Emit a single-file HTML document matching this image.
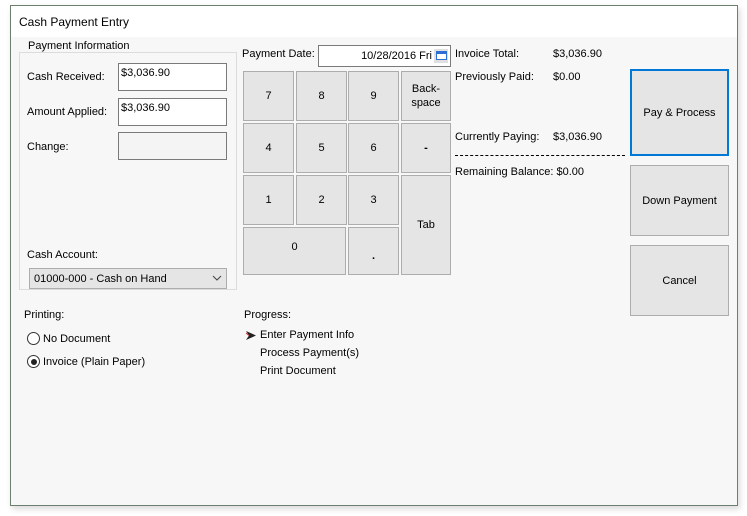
<!DOCTYPE html>
<html><head><style>
body{margin:0;width:747px;height:516px;background:#fff;font-family:"Liberation Sans",sans-serif;font-size:11px;color:#000;position:relative;overflow:hidden}
.a{position:absolute;white-space:nowrap}
.win{position:absolute;left:10px;top:5px;width:726px;height:499px;border:1px solid #6b806e;background:#f7f7f7;box-shadow:2px 3px 6px rgba(0,0,0,.15)}
.title{position:absolute;left:11px;top:6px;width:726px;height:31px;background:#fff}
.tb{position:absolute;border:1px solid #7a7a7a;background:#fff;box-sizing:border-box;padding:3px 2px;font-size:11px}
.btn{position:absolute;background:#e5e5e5;border:1px solid #adadad;box-sizing:border-box;display:flex;align-items:center;justify-content:center;text-align:center;line-height:14px}
</style></head><body>
<div class="win"></div>
<div class="title"></div>
<div class="a" style="left:19px;top:15px;font-size:12px">Cash Payment Entry</div>
<div class="a" style="left:19px;top:52px;width:218px;height:238px;border:1px solid #dcdcdc;box-sizing:border-box"></div>
<div class="a" style="left:25px;top:40px;background:#f7f7f7;padding:0 3px">Payment Information</div>
<div class="a" style="left:27px;top:71px">Cash Received:</div>
<div class="tb" style="left:118px;top:63px;width:109px;height:28px">$3,036.90</div>
<div class="a" style="left:27px;top:106px">Amount Applied:</div>
<div class="tb" style="left:118px;top:98px;width:109px;height:28px">$3,036.90</div>
<div class="a" style="left:27px;top:141px">Change:</div>
<div class="tb" style="left:118px;top:132px;width:109px;height:28px;background:#f4f4f4"></div>
<div class="a" style="left:27px;top:249px">Cash Account:</div>
<div class="tb" style="left:29px;top:268px;width:198px;height:21px;background:#e5e5e5;border-color:#adadad;padding:4px 4px">01000-000 - Cash on Hand</div>
<svg class="a" style="left:212px;top:275px" width="10" height="6"><path d="M1 1L5 5L9 1" fill="none" stroke="#444"/></svg>

<div class="a" style="left:242px;top:48px">Payment Date:</div>
<div class="tb" style="left:318px;top:45px;width:133px;height:22px;padding:4px 18px 0 0;text-align:right">10/28/2016 Fri</div>
<div class="a" style="left:434px;top:49px;width:14px;height:14px;background:#e0e0e0"></div>
<div class="a" style="left:436px;top:51px;width:9px;height:7px;border:1px solid #2a6ed6;background:#fff"><div style="height:2px;background:#2a6ed6"></div></div>

<div class="btn" style="left:243px;top:71px;width:51px;height:50px">7</div>
<div class="btn" style="left:296px;top:71px;width:51px;height:50px">8</div>
<div class="btn" style="left:348px;top:71px;width:51px;height:50px">9</div>
<div class="btn" style="left:401px;top:71px;width:50px;height:50px">Back-<br>space</div>
<div class="btn" style="left:243px;top:123px;width:51px;height:50px">4</div>
<div class="btn" style="left:296px;top:123px;width:51px;height:50px">5</div>
<div class="btn" style="left:348px;top:123px;width:51px;height:50px">6</div>
<div class="btn" style="left:401px;top:123px;width:50px;height:50px;font-weight:bold">-</div>
<div class="btn" style="left:243px;top:175px;width:51px;height:50px">1</div>
<div class="btn" style="left:296px;top:175px;width:51px;height:50px">2</div>
<div class="btn" style="left:348px;top:175px;width:51px;height:50px">3</div>
<div class="btn" style="left:401px;top:175px;width:50px;height:100px">Tab</div>
<div class="btn" style="left:243px;top:227px;width:103px;height:48px;padding-bottom:8px">0</div>
<div class="btn" style="left:348px;top:227px;width:51px;height:48px;padding-top:10px;font-weight:bold">.</div>

<div class="a" style="left:455px;top:48px">Invoice Total:</div><div class="a" style="left:553px;top:48px">$3,036.90</div>
<div class="a" style="left:455px;top:71px">Previously Paid:</div><div class="a" style="left:553px;top:71px">$0.00</div>
<div class="a" style="left:455px;top:131px">Currently Paying:</div><div class="a" style="left:553px;top:131px">$3,036.90</div>
<div class="a" style="left:455px;top:155px;width:170px;border-top:1px dashed #000"></div>
<div class="a" style="left:455px;top:166px">Remaining Balance: $0.00</div>

<div class="btn" style="left:630px;top:69px;width:99px;height:87px;border:2px solid #0078d7">Pay &amp; Process</div>
<div class="btn" style="left:630px;top:165px;width:99px;height:71px">Down Payment</div>
<div class="btn" style="left:630px;top:245px;width:99px;height:71px">Cancel</div>

<div class="a" style="left:24px;top:309px">Printing:</div>
<div class="a" style="left:27px;top:332px;width:11px;height:11px;border:1px solid #333;border-radius:50%;background:#fff"></div>
<div class="a" style="left:43px;top:333px">No Document</div>
<div class="a" style="left:27px;top:355px;width:11px;height:11px;border:1px solid #333;border-radius:50%;background:#fff"><div style="margin:2.5px;width:6px;height:6px;border-radius:50%;background:#222"></div></div>
<div class="a" style="left:43px;top:356px">Invoice (Plain Paper)</div>

<div class="a" style="left:244px;top:309px">Progress:</div>
<svg class="a" style="left:245px;top:330px" width="12" height="11"><path d="M1 1L11 5.5L1 10L4 5.5Z" fill="#222"/><path d="M4 5.5L1 3" stroke="#c33" stroke-width="1"/></svg>
<div class="a" style="left:260px;top:329px">Enter Payment Info</div>
<div class="a" style="left:260px;top:347px">Process Payment(s)</div>
<div class="a" style="left:260px;top:365px">Print Document</div>
</body></html>
